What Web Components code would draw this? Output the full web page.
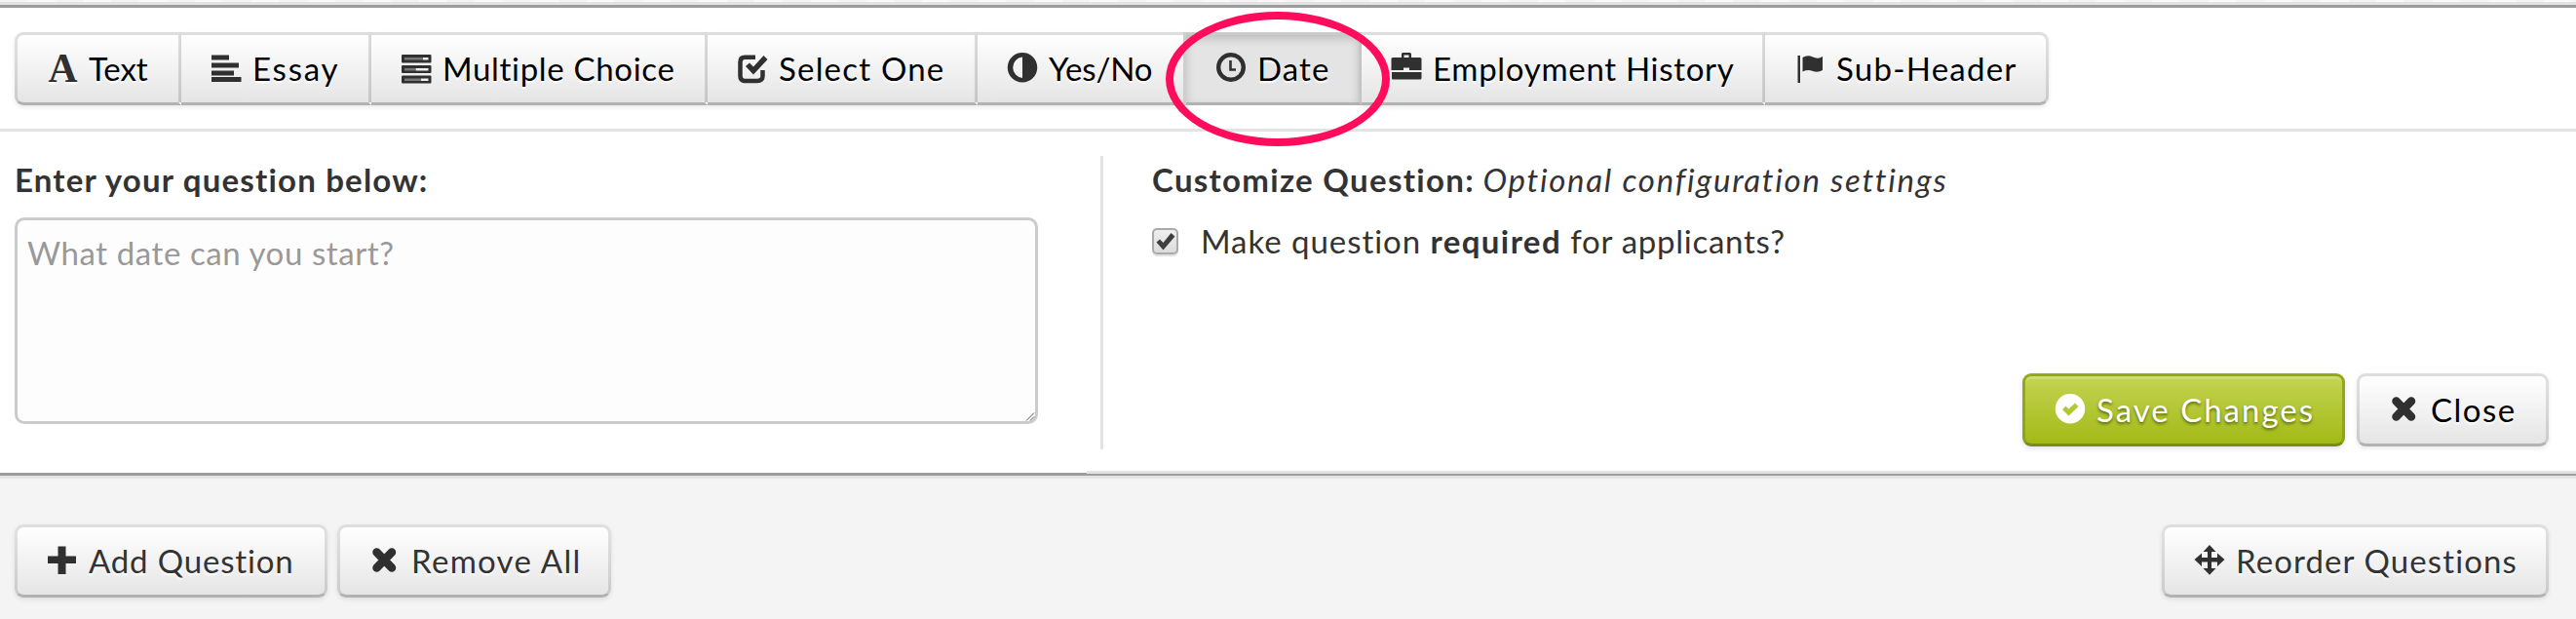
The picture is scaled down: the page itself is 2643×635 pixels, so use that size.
<!DOCTYPE html>
<html lang="en">
<head>
<meta charset="utf-8">
<title>Question editor</title>
<style>
  body {
    margin: 0;
    background: #f4f4f4;
    color: #333;
    font: 400 33px/38px Lato, "Liberation Sans", sans-serif;
  }
</style>
</head>
<body>
<question-page></question-page>

<script>
// icons, all on a 30x30 grid
const icons = {
  text: `<text x="15.500" y="29.500" text-anchor="middle" font-family="Liberation Serif" font-weight="700" font-size="42" textLength="30" lengthAdjust="spacingAndGlyphs">A</text>`,
  essay: `<path d="M0 2.500h18v5H0zM0 10.500h28v5H0zM0 18.500h23v5H0zM0 25h30.500v5H0z"/>`,
  multiple: `<rect y="2" width="30.500" height="8.500" rx="1"/><rect y="13" width="30.500" height="8" rx="1"/><rect y="23.500" width="30.500" height="8" rx="1"/>
    <path fill="#777" d="M3 5h19v2.500H3zM3 16h11v2.500H3zM3 26.500h17v2.500H3z"/><path fill="#eee" d="M22 5h5.500v2.500H22zM14.500 16h13v2.500h-13zM20 26.500h7.500v2.500H20z"/>`,
  select: `<path fill="none" stroke="currentColor" stroke-width="4.500" d="M18 4.800H7.500Q2.500 4.800 2.500 9.500V24Q2.500 29 7.500 29H20Q25.500 29 25.500 24V18"/><path d="M8 14l4-3.500 4 4L26.500 3l4 4L16 22.500z"/>`,
  yesno: `<path fill-rule="evenodd" d="M15 0a15 15 0 1 0 0 30.500A15 15 0 1 0 15 0zM15 4.500v21.500a10.800 10.800 0 0 1 0-21.500z"/>`,
  date: `<circle cx="15" cy="15" r="12.800" fill="none" stroke="currentColor" stroke-width="4.400"/><path fill="none" stroke="currentColor" stroke-width="2.600" d="M14.500 8v9.500h5.500"/>`,
  briefcase: `<path fill-rule="evenodd" d="M10 5V1.500Q10 0 11.500 0h7Q20 0 20 1.500V5h9q1.500 0 1.500 1.500V18H18v-2.500h-6V18H-.500V6.500Q-.500 5 1 5zM12.500 2.500V5h5V2.500z"/><path d="M0 20h30.500v6q0 1.500-1.500 1.500H1Q0 27.500 0 26z"/>`,
  flag: `<path d="M2.500 3h2.500v28H2.500zM7.500 5q5-3 10.500-.500T28 4v14q-5 3-10 1t-10.500.500z"/>`,
  check: `<path fill-rule="evenodd" d="M15 0a15 15 0 1 0 0 30.500A15 15 0 1 0 15 0zM7 16l3.500-3.500 3 3L20 9.500l3.500 3.500-10 9.500z"/>`,
  cross: `<path fill="none" stroke="currentColor" stroke-width="8.500" stroke-linecap="round" d="M6.500 7.500l15.500 16M22 7.500l-15.500 16"/>`,
  plus: `<path d="M10.500 1.500h8v10H29v7.500H18.500V30h-8V19H0v-7.500h10.500z"/>`,
  move: `<path d="M15 0l6.500 7h-4.500v6h6V8.500L30.500 15l-7.500 7v-4.500h-6V24h4.500L15 30.800 8.500 24H13v-6.500H7V22L-.500 15 7 8.500V13h6V7H8.500z"/>`
};

function attach(el, html) {
  const t = document.createElement("template");
  t.innerHTML = html;
  el.attachShadow({ mode: "open" }).appendChild(t.content.cloneNode(true));
}

class GlyphIcon extends HTMLElement {
  connectedCallback() {
    if (this.shadowRoot) return;
    attach(this, `
      <style>
        :host { display: block; flex: none; width: 30px; height: 30px; letter-spacing: 0; }
        svg { display: block; overflow: visible; fill: currentColor; }
      </style>
      <svg width="30" height="30" viewBox="0 0 30 30" aria-hidden="true">${icons[this.getAttribute("name")]}</svg>
    `);
  }
}
customElements.define("glyph-icon", GlyphIcon);

class UiButton extends HTMLElement {
  connectedCallback() {
    if (this.shadowRoot) return;
    attach(this, `
      <style>
        :host {
          display: flex;
          box-sizing: border-box;
          width: var(--w);
          height: 75px;
          flex: none;
          align-items: center;
          gap: 12px;
          padding: 0 0 2px 31px;
          white-space: nowrap;
          border: 3px solid transparent;
          border-bottom-color: #b2b2b2;
          border-radius: 9px;
          color: var(--ink, #333);
          background: linear-gradient(#fff, #e5e5e5) padding-box, linear-gradient(#ddd, #e0e0e0 10%, #cacaca) border-box;
          box-shadow: 0 2px 5px rgba(0, 0, 0, .09);
          text-shadow: 0 2px 2px #fff;
        }
        glyph-icon { color: #303030; margin-top: -1px; }
        :host([joined]) { border-radius: 0; border-left-width: 0; }
        :host([joined="first"]) { border-radius: 9px 0 0 9px; border-left-width: 3px; }
        :host([joined="last"]) { border-radius: 0 9px 9px 0; }
        :host([active]) {
          background: linear-gradient(#e4e4e4, #e4e4e4) padding-box, #cbcbcb border-box;
          box-shadow: inset 0 4px 10px rgba(0, 0, 0, .17), -3px 0 #cecece;
        }
        :host([primary]) {
          border-bottom-color: #788d11;
          color: #fff;
          background: linear-gradient(#c4d352, #a2ba16) padding-box, linear-gradient(#94a81b, #8da316) border-box;
          box-shadow: inset 0 3px 1px rgba(255, 255, 255, .2), 0 2px 5px rgba(0, 0, 0, .12);
          text-shadow: 0 2px 3px rgba(60, 75, 0, .75);
        }
        :host([primary]) glyph-icon { color: #fff; }
      </style>
      <glyph-icon name="${this.getAttribute("icon")}"></glyph-icon>
      <slot></slot>
    `);
  }
}
customElements.define("ui-button", UiButton);

class TypeToolbar extends HTMLElement {
  constructor() {
    super();
    attach(this, `
      <style>
        :host {
          display: flex;
          position: relative;
          box-sizing: border-box;
          height: 127px;
          padding: 25px 15px 0;
          border-bottom: 3px solid #e3e3e3;
          --ink: #000;
        }
        /* highlight ring drawn over the active type */
        .ring {
          position: absolute;
          left: 1196px;
          top: 4px;
          box-sizing: border-box;
          width: 230px;
          height: 138px;
          border: 8px solid #ff0d5c;
          border-radius: 50%;
          z-index: 1;
        }
      </style>
      <slot></slot>
      <div class="ring"></div>
    `);
  }
}
customElements.define("type-toolbar", TypeToolbar);

class QuestionField extends HTMLElement {
  constructor() {
    super();
    attach(this, `
      <style>
        :host { display: block; width: 1050px; }
        .label { height: 40px; padding-top: 5px; font-weight: 700; letter-spacing: 1.19px; }
        .area {
          position: relative;
          box-sizing: border-box;
          height: 212px;
          margin-top: 18px;
          padding: 14px 10px;
          border: 3px solid #cbcbcb;
          border-radius: 10px;
          background: #fdfdfd;
          color: #999;
          letter-spacing: .58px;
        }
        svg { position: absolute; right: 0; bottom: 0; }
      </style>
      <div class="label"><slot name="label"></slot></div>
      <div class="area">
        <slot></slot>
        <svg width="10" height="10"><path d="M1 9.500L9 1.500M5 9.500L9 5.500" stroke="#555" stroke-width="1"/></svg>
      </div>
    `);
  }
}
customElements.define("question-field", QuestionField);

class CheckOption extends HTMLElement {
  constructor() {
    super();
    attach(this, `
      <style>
        :host { display: flex; align-items: center; gap: 23px; white-space: nowrap; }
        .box {
          box-sizing: border-box;
          width: 27px;
          height: 27px;
          border: 2px solid #aaa;
          border-radius: 5px;
          background: linear-gradient(#efefef, #dcdcdc);
          box-shadow: 0 2px 1px #e2e2e2;
        }
        svg { display: block; }
      </style>
      <div class="box"><svg width="23" height="23"><path fill="#404040" d="M2.500 12.500l3.500-3 3.500 3.500L17.500 3l4 3.500L9.500 20.500z"/></svg></div>
      <div><slot></slot></div>
    `);
  }
}
customElements.define("check-option", CheckOption);

class QuestionPage extends HTMLElement {
  constructor() {
    super();
    attach(this, `
      <style>
        :host { display: block; height: 635px; overflow: hidden; }
        .top {
          height: 2px;
          border-bottom: 3px solid #e3e3e3;
          background: repeating-linear-gradient(115deg, #f4f4f4 0 26px, #fafafa 26px 52px);
        }
        .panel { border-top: 3px solid #9c9c9c; background: #fff; }
        .editor {
          display: flex;
          box-sizing: border-box;
          height: 348px;
          padding: 25px 28px 22px 15px;
        }
        .settings {
          display: flex;
          flex-direction: column;
          flex: 1;
          box-sizing: border-box;
          height: 301px;
          margin-left: 64px;
          padding: 5px 0 3px 50px;
          border-left: 3px solid #e3e3e3;
        }
        b { font-weight: 700; }
        check-option { margin-top: 25px; }
        .actions { display: flex; justify-content: flex-end; gap: 12px; margin-top: auto; }
        .edge { display: flex; align-items: flex-end; }
        .edge div { width: 1115px; height: 3px; background: #9c9e9c; }
        .edge div + div { flex: 1; height: 2px; border-top: 3px solid #e3e3e3; }
        .footer {
          display: flex;
          gap: 10px;
          padding: 47px 28px 0 15px;
          border-top: 3px solid #e4e4e4;
        }
        .footer :last-child { margin-left: auto; }
      </style>
      <div class="top"></div>
      <div class="panel">
        <type-toolbar>
          <ui-button joined="first" icon="text" style="--w:171px;letter-spacing:-.1px">Text</ui-button>
          <ui-button joined icon="essay" style="--w:195px;letter-spacing:1.8px">Essay</ui-button>
          <ui-button joined icon="multiple" style="--w:345px;letter-spacing:.68px">Multiple Choice</ui-button>
          <ui-button joined icon="select" style="--w:277px;letter-spacing:1.2px">Select One</ui-button>
          <ui-button joined icon="yesno" style="--w:214px;letter-spacing:-.1px">Yes/No</ui-button>
          <ui-button joined active icon="date" style="--w:180px;letter-spacing:1.1px">Date</ui-button>
          <ui-button joined icon="briefcase" style="--w:414px;letter-spacing:.7px">Employment History</ui-button>
          <ui-button joined="last" icon="flag" style="--w:291px;letter-spacing:1.25px">Sub-Header</ui-button>
        </type-toolbar>
        <div class="editor">
          <question-field><span slot="label">Enter your question below:</span>What date can you start?</question-field>
          <div class="settings">
            <div><b style="letter-spacing:1.3px">Customize Question:</b> <i style="letter-spacing:1.72px">Optional configuration settings</i></div>
            <check-option><span style="letter-spacing:.95px">Make question <b style="letter-spacing:1.4px">required</b></span><span style="letter-spacing:.74px"> for applicants?</span></check-option>
            <div class="actions">
              <ui-button primary icon="check" style="--w:331px;letter-spacing:2px">Save Changes</ui-button>
              <ui-button icon="cross" style="--w:197px;--ink:#000;letter-spacing:1.5px">Close</ui-button>
            </div>
          </div>
        </div>
        <div class="edge"><div></div><div></div></div>
      </div>
      <div class="footer">
        <ui-button icon="plus" style="--w:321px;letter-spacing:.83px">Add Question</ui-button>
        <ui-button icon="cross" style="--w:281px;letter-spacing:1.3px">Remove All</ui-button>
        <ui-button icon="move" style="--w:397px;letter-spacing:1.1px">Reorder Questions</ui-button>
      </div>
    `);
  }
}
customElements.define("question-page", QuestionPage);
</script>
</body>
</html>
